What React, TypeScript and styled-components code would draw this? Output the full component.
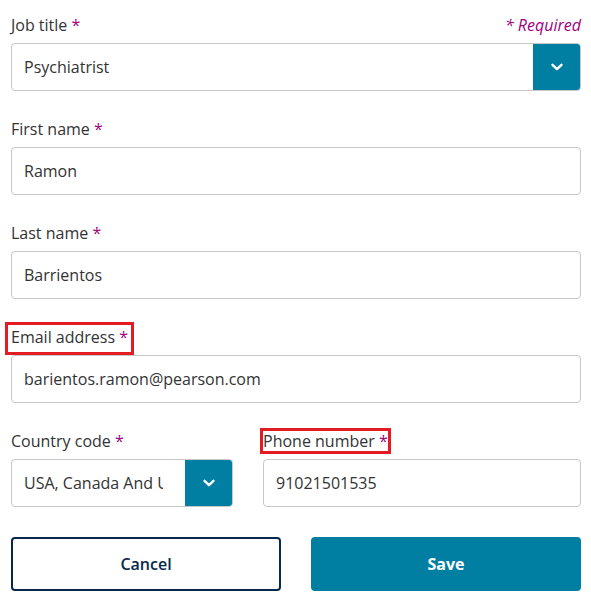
import styled, { createGlobalStyle } from "styled-components";

const GlobalStyle = createGlobalStyle`
  body {
    margin: 0;
    background: #fff;
    font-family: "Open Sans", "Liberation Sans", sans-serif;
    color: #333;
  }
`;

const Form = styled.form`
  width: 570px;
  padding: 14px 10px 0 11px;
  display: flex;
  flex-direction: column;
  gap: 27px;
`;

const Field = styled.div`
  display: flex;
  flex-direction: column;
  gap: 7px;
  min-width: 0;
`;

const LabelRow = styled.div`
  display: flex;
  justify-content: space-between;
  align-items: center;
  height: 22px;
`;

const Label = styled.label`
  font-size: 16px;
  line-height: 22px;
  color: #333;
`;

const Star = styled.span`
  color: #9e007e;
`;

const Required = styled.span`
  font-size: 16px;
  font-style: italic;
  color: #9e007e;
`;

interface MarkProps {
  $px: number;
  $top: number;
  $bottom: number;
}

// red annotation box drawn around a label
const Mark = styled.span<MarkProps>`
  position: relative;
  &::after {
    content: "";
    position: absolute;
    left: -${(p) => p.$px}px;
    right: -${(p) => p.$px}px;
    top: -${(p) => p.$top}px;
    bottom: -${(p) => p.$bottom}px;
    border: 3px solid #e31c24;
  }
`;

const Box = styled.div`
  height: 48px;
  box-sizing: border-box;
  border: 1px solid #c7c7c7;
  border-radius: 4px;
  display: flex;
  align-items: center;
  overflow: hidden;
  background: #fff;
`;

const Value = styled.span<{ $clip?: boolean }>`
  flex: 1;
  min-width: 0;
  margin: ${(p) => (p.$clip ? "0 22px 0 12px" : "0 12px")};
  font-size: 16px;
  color: #333;
  white-space: nowrap;
  overflow: hidden;
`;

const Chevron = styled.div`
  width: 48px;
  height: 48px;
  margin: -1px -1px -1px 0;
  background: #007fa3;
  display: flex;
  align-items: center;
  justify-content: center;
  flex-shrink: 0;
`;

const Row = styled.div`
  display: grid;
  grid-template-columns: 222px 1fr;
  gap: 30px;
`;

const Buttons = styled.div`
  display: grid;
  grid-template-columns: 1fr 1fr;
  gap: 30px;
  margin-top: 3px;
`;

const Button = styled.button<{ $primary?: boolean }>`
  height: 54px;
  border-radius: 4px;
  font-family: inherit;
  font-size: 16px;
  font-weight: ${(p) => (p.$primary ? 700 : 600)};
  border: 2px solid ${(p) => (p.$primary ? "#007fa3" : "#05294b")};
  background: ${(p) => (p.$primary ? "#007fa3" : "#fff")};
  color: ${(p) => (p.$primary ? "#fff" : "#05294b")};
  cursor: pointer;
`;

const Arrow = () => (
  <svg width="14" height="14" viewBox="0 0 14 14" fill="none">
    <path d="M2.5 4.8 7 9.2l4.5-4.4" stroke="#fff" strokeWidth="2.4" strokeLinecap="round" strokeLinejoin="round" />
  </svg>
);

const Select = ({ value, clip }: { value: string; clip?: boolean }) => (
  <Box>
    <Value $clip={clip}>{value}</Value>
    <Chevron>
      <Arrow />
    </Chevron>
  </Box>
);

export default function App() {
  return (
    <>
      <GlobalStyle />
      <Form>
        <Field>
          <LabelRow>
            <Label>
              Job title <Star>*</Star>
            </Label>
            <Required>* Required</Required>
          </LabelRow>
          <Select value="Psychiatrist" />
        </Field>

        <Field>
          <LabelRow>
            <Label>
              First name <Star>*</Star>
            </Label>
          </LabelRow>
          <Box>
            <Value>Ramon</Value>
          </Box>
        </Field>

        <Field>
          <LabelRow>
            <Label>
              Last name <Star>*</Star>
            </Label>
          </LabelRow>
          <Box>
            <Value>Barrientos</Value>
          </Box>
        </Field>

        <Field>
          <LabelRow>
            <Label>
              <Mark $px={6} $top={4} $bottom={7}>
                Email address <Star>*</Star>
              </Mark>
            </Label>
          </LabelRow>
          <Box>
            <Value>barientos.ramon@pearson.com</Value>
          </Box>
        </Field>

        <Row>
          <Field>
            <LabelRow>
              <Label>
                Country code <Star>*</Star>
              </Label>
            </LabelRow>
            <Select value="USA, Canada And United States" clip />
          </Field>
          <Field>
            <LabelRow>
              <Label>
                <Mark $px={3} $top={2} $bottom={2}>
                  Phone number <Star>*</Star>
                </Mark>
              </Label>
            </LabelRow>
            <Box>
              <Value>91021501535</Value>
            </Box>
          </Field>
        </Row>

        <Buttons>
          <Button type="button">Cancel</Button>
          <Button type="button" $primary>
            Save
          </Button>
        </Buttons>
      </Form>
    </>
  );
}
